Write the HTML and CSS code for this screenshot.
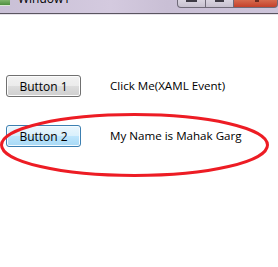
FILE: index.html
```html
<!DOCTYPE html>
<html lang="en">
<head>
    <meta charset="UTF-8">
    <title>Window1</title>
    <link rel="stylesheet" href="styles.css">
</head>
<body>

    <!-- Title bar (top is cut off) -->
    <div class="titlebar">
        <div class="app-icon"></div>
        <span class="title">Window1</span>
        <div class="caption">
            <div class="cap-btn min"><span></span></div>
            <div class="cap-btn max"><span></span></div>
            <div class="cap-btn close"><span></span></div>
        </div>
    </div>

    <!-- Window content -->
    <div class="content">
        <div class="row first">
            <button class="btn">Button 1</button>
            <span class="label">Click Me(XAML Event)</span>
        </div>
        <div class="row">
            <button class="btn focused">Button 2</button>
            <span class="label">My Name is Mahak Garg</span>
        </div>
    </div>

    <!-- Red marker drawn over the screenshot -->
    <svg class="marker" width="278" height="267" viewBox="0 0 278 267">
        <ellipse cx="134.5" cy="145" rx="133" ry="30.5" fill="none" stroke="#ed1c24" stroke-width="3"/>
    </svg>

</body>
</html>
```

FILE: styles.css
```css
* {
    margin: 0;
    padding: 0;
    box-sizing: border-box;
}

body {
    width: 278px;
    height: 267px;
    background-color: #fff;
    font-family: 'Open Sans', 'DejaVu Sans', sans-serif;
    color: #000;
    position: relative;
    overflow: hidden;
}

/* Title bar */
.titlebar {
    height: 14px;
    display: flex;
    align-items: flex-start;
    background: linear-gradient(to right, #c9c0d6, #d4cadf 40%, #c9bfd5 60%, #cdc4da);
    border-bottom: 1px solid #5a5560;
    box-shadow: 0 1px 0 #e6e2ea;
}

.app-icon {
    width: 10px;
    height: 6px;
    background: linear-gradient(#7fb56b, #4e8f3e);
    border-bottom: 1px solid #d8e8d0;
}

.title {
    font-size: 12px;
    line-height: 12px;
    margin-left: 8px;
    margin-top: -7px;
    color: #000;
}

.caption {
    display: flex;
    margin-left: auto;
    height: 8px;
}

.cap-btn {
    height: 8px;
    border: 1px solid #6f6a78;
    border-top: none;
    display: flex;
    justify-content: center;
}

.cap-btn span {
    display: block;
    height: 2px;
    background-color: #3d3a44;
}

.min {
    width: 29px;
    border-radius: 0 0 0 4px;
    background: linear-gradient(#d9d4e0, #c7c1cf);
}

.min span {
    width: 11px;
}

.max {
    width: 28px;
    border-left: none;
    background: linear-gradient(#d9d4e0, #c7c1cf);
}

.max span {
    width: 9px;
}

.close {
    width: 44px;
    border-left: none;
    border-radius: 0 0 4px 0;
    background: linear-gradient(#d66a4e, #c4412b);
}

.close span {
    width: 4px;
    margin-left: 2px;
    background-color: #6a2a20;
}

/* Content rows */
.content {
    padding-left: 6px;
}

.row {
    display: grid;
    grid-template-columns: 75px auto;
    column-gap: 29px;
    align-items: center;
    margin-top: 28px;
}

.row.first {
    margin-top: 61px;
}

.label {
    font-size: 11.6px;
    line-height: 16px;
    color: #000;
}

/* Aero style buttons */
.btn {
    width: 75px;
    height: 22px;
    font-family: 'Open Sans', 'DejaVu Sans', sans-serif;
    font-size: 12px;
    color: #000;
    border: 1px solid #707070;
    border-radius: 3px;
    background: linear-gradient(#f2f2f2, #ebebeb 50%, #dddddd 50%, #cfcfcf);
    box-shadow: inset 0 0 0 1px #fcfcfc;
}

.btn.focused {
    border-color: #3c7fb1;
    background: linear-gradient(#eaf6fd, #d9f0fc 50%, #bee6fd 50%, #a7d9f5);
    box-shadow: inset 0 0 0 1px #f4fbff;
}

/* Overlay */
.marker {
    position: absolute;
    left: 0;
    top: 0;
}
```
